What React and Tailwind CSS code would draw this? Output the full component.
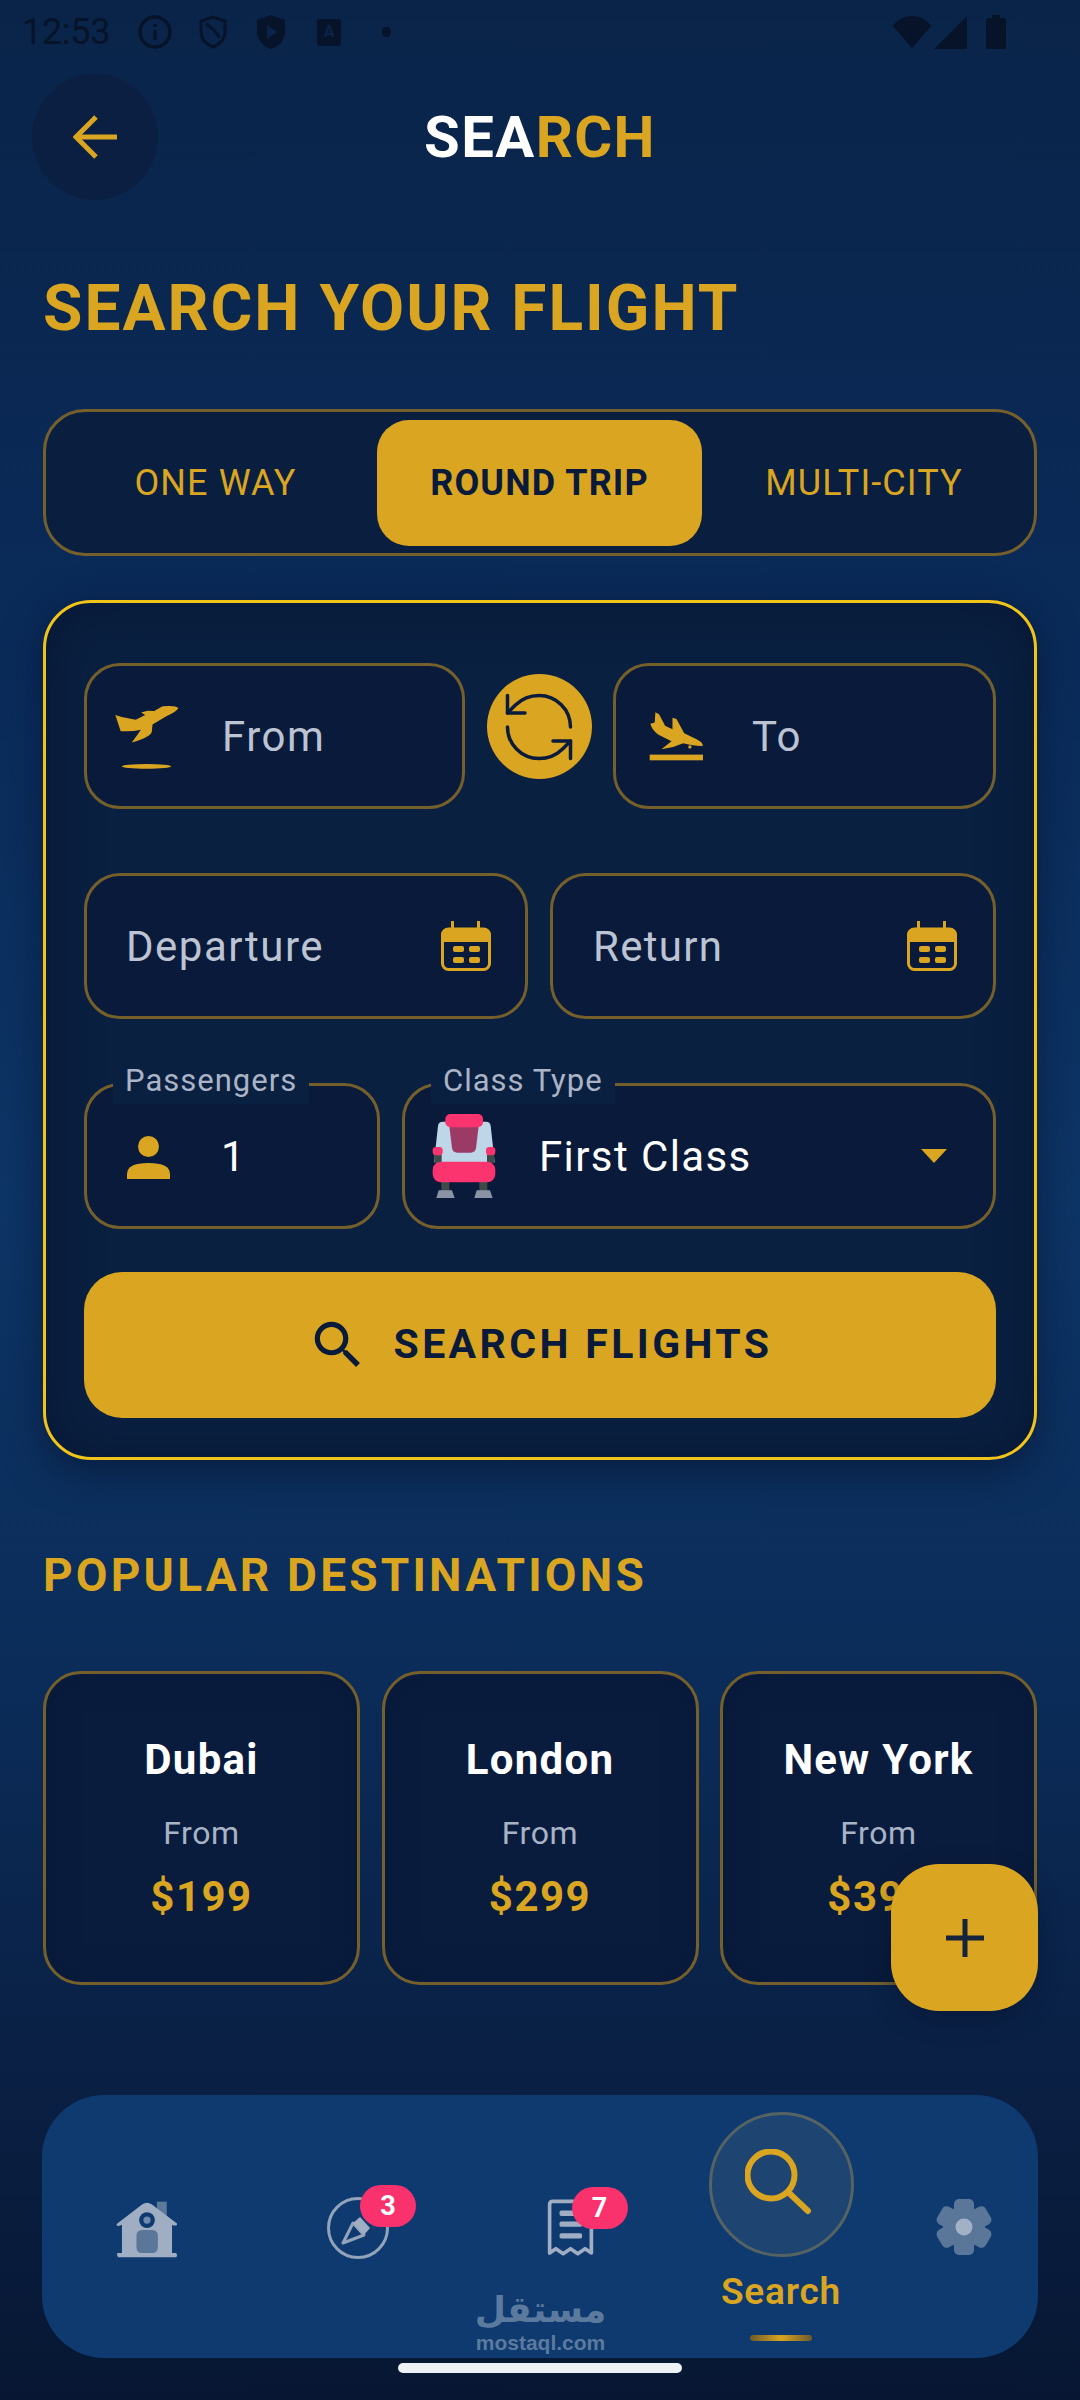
import React from "react";
import { RefreshCcw } from "lucide-react";
import { MdSearch } from "react-icons/md";

const destinations = [
  { city: "Dubai", price: "$199" },
  { city: "London", price: "$299" },
  { city: "New York", price: "$399" },
];

export default function App() {
  return (
    <div className="relative w-[1080px] h-[2400px] overflow-hidden [font-family:Roboto,sans-serif] bg-[linear-gradient(180deg,#0a2449_0%,#0a2a58_25%,#0d3566_50%,#0b2c59_70%,#0a2044_86%,#071733_100%)]">
      <StatusBar />

      {/* HEADER */}
      <div className="flex items-center justify-between px-[32px] mt-[10px]">
        <button className="flex items-center justify-center w-[126px] h-[126px] rounded-full bg-[#0a1f42]">
          <svg viewBox="0 0 44 44" className="w-[44px] h-[44px]" fill="none" stroke="#daa520" strokeWidth="5">
            <path d="M44 22H4" />
            <path d="M23 2 3 22l20 20" />
          </svg>
        </button>
        <h1 className="text-[58px] leading-[66px] font-bold tracking-[1.4px] text-white">
          SEA<span className="text-[#daa520]">RCH</span>
        </h1>
        <div className="w-[126px]" />
      </div>

      <div className="px-[43px]">
        <h2 className="mt-[72px] text-[64px] leading-[74px] font-bold tracking-[2px] text-[#daa520]">
          SEARCH YOUR FLIGHT
        </h2>

        {/* TABS */}
        <div className="mt-[63px] h-[147px] flex items-center rounded-[42px] border-[3px] border-[#75602c] bg-[#0a1f40] px-[8px] text-[36px] tracking-[1.1px] text-[#daa520]">
          <div className="w-[323px] text-center">ONE WAY</div>
          <div className="w-[325px] h-[126px] flex items-center justify-center rounded-[32px] bg-[#daa520] font-bold text-[#0a1a3a]">
            ROUND TRIP
          </div>
          <div className="flex-1 text-center">MULTI-CITY</div>
        </div>

        {/* SEARCH FORM */}
        <div className="mt-[44px] h-[860px] rounded-[48px] border-[3px] border-[#f0c419] bg-[#0a2040] shadow-[0_12px_40px_rgba(5,15,40,0.55),inset_0_0_50px_#081634] px-[38px] pt-[60px]">
          <div className="flex items-start justify-between">
            <Field className="w-[381px] pl-[27px]">
              <TakeoffIcon />
              <span className="ml-[41px] text-[42px] tracking-[1.5px] text-[#bcc4d4]">From</span>
            </Field>
            <button className="mt-[11px] flex items-center justify-center w-[105px] h-[105px] rounded-full bg-[#daa520]">
              <RefreshCcw size={84} strokeWidth={1} color="#0b1b3c" />
            </button>
            <Field className="w-[383px] pl-[32px]">
              <LandIcon />
              <span className="ml-[47px] text-[42px] tracking-[1.5px] text-[#bcc4d4]">To</span>
            </Field>
          </div>

          <div className="flex justify-between mt-[64px]">
            <Field className="w-[444px] pl-[39px] pr-[34px] justify-between">
              <span className="text-[42px] tracking-[1.5px] text-[#bcc4d4]">Departure</span>
              <CalendarIcon />
            </Field>
            <Field className="w-[446px] pl-[40px] pr-[36px] justify-between">
              <span className="text-[42px] tracking-[1.3px] text-[#bcc4d4]">Return</span>
              <CalendarIcon />
            </Field>
          </div>

          <div className="flex justify-between mt-[64px]">
            <Field className="relative w-[296px] pl-[40px]">
              <FloatLabel className="left-[26px]">Passengers</FloatLabel>
              <PersonIcon />
              <span className="ml-[51px] text-[42px] text-white">1</span>
            </Field>
            <Field className="relative w-[594px] pl-[27px] pr-[46px]">
              <FloatLabel className="left-[26px]">Class Type</FloatLabel>
              <SeatIcon />
              <span className="ml-[43px] text-[42px] tracking-[1.4px] text-white">First Class</span>
              <svg viewBox="0 0 26 14" className="ml-auto w-[26px] h-[14px]">
                <path d="M0 0h26L13 14z" fill="#daa520" />
              </svg>
            </Field>
          </div>

          <button className="mt-[43px] w-full h-[146px] flex items-center justify-center rounded-[38px] bg-[#daa520] text-[41px] font-bold tracking-[3.4px] text-[#0a1a3a]">
            <MdSearch size={62} color="#0a1a3a" />
            <span className="ml-[24px]">SEARCH FLIGHTS</span>
          </button>
        </div>

        {/* POPULAR */}
        <h3 className="mt-[88px] text-[46px] leading-[54px] font-bold tracking-[3.2px] text-[#daa520]">
          POPULAR DESTINATIONS
        </h3>

        <div className="mt-[69px] flex justify-between">
          {destinations.map((d) => (
            <div
              key={d.city}
              className="w-[317px] h-[314px] flex flex-col items-center rounded-[38px] border-[3px] border-[#75602c] bg-[#0a1c3d] shadow-[inset_0_0_30px_#08193a] pt-[61px]"
            >
              <div className="text-[42px] leading-[50px] font-bold tracking-[1.3px] text-white">{d.city}</div>
              <div className="mt-[29px] text-[32px] leading-[38px] tracking-[0.6px] text-[#a9b3c6]">From</div>
              <div className="mt-[20px] text-[42px] leading-[50px] font-bold tracking-[1.5px] text-[#daa520]">{d.price}</div>
            </div>
          ))}
        </div>
      </div>

      {/* FAB */}
      <button className="absolute left-[891px] top-[1864px] w-[147px] h-[147px] flex items-center justify-center rounded-[48px] bg-[#daa520] shadow-[0_8px_24px_rgba(5,15,40,0.4)]">
        <svg viewBox="0 0 38 38" className="w-[38px] h-[38px]" stroke="#15233c" strokeWidth="5">
          <path d="M19 0v38M0 19h38" />
        </svg>
      </button>

      <BottomNav />

      <div className="absolute left-[398px] top-[2363px] w-[284px] h-[10px] rounded-full bg-[#eef1f6]" />
    </div>
  );
}

/* ===============================
   HELPERS
================================ */
function Field({ className, children }) {
  return (
    <div className={`h-[146px] flex items-center rounded-[36px] border-[3px] border-[#75602c] bg-[#0a1a3a] ${className}`}>
      {children}
    </div>
  );
}

function FloatLabel({ className, children }) {
  return (
    <span className={`absolute top-[-28px] h-[46px] px-[12px] bg-[#0a2040] text-[31px] leading-[46px] tracking-[1px] text-[#aab4c6] ${className}`}>
      {children}
    </span>
  );
}

function StatusBar() {
  return (
    <div className="h-[64px] flex items-center pl-[22px] pr-[74px] text-[#061329]">
      <span className="text-[36px] leading-[40px] tracking-[-0.3px]">12:53</span>
      <svg viewBox="0 0 34 34" className="ml-[28px] w-[34px] h-[34px]" fill="none" stroke="currentColor" strokeWidth="3.5">
        <circle cx="17" cy="17" r="15" />
        <path d="M17 15v10M17 9v3" />
      </svg>
      <svg viewBox="0 0 28 34" className="ml-[27px] w-[28px] h-[34px]" fill="none" stroke="currentColor" strokeWidth="3">
        <path d="M14 2 2 6v11c0 7 5 12 12 15 7-3 12-8 12-15V6z" />
        <path d="M7 8c5 6 12 9 13 15" />
      </svg>
      <svg viewBox="0 0 28 34" className="ml-[30px] w-[28px] h-[34px]">
        <path d="M14 0 0 5v12c0 8 6 14 14 17 8-3 14-9 14-17V5z" fill="currentColor" />
        <path d="M10 10l10 7-10 7z" fill="#0a2449" />
      </svg>
      <div className="ml-[32px] w-[24px] h-[27px] rounded-[3px] bg-current flex items-center justify-center">
        <span className="text-[16px] leading-none font-bold text-[#0a2449]">A</span>
      </div>
      <div className="ml-[41px] w-[9px] h-[10px] rounded-full bg-current" />
      <svg viewBox="0 0 38 32" className="ml-auto w-[38px] h-[32px]" fill="currentColor">
        <path d="M19 32 0 10C5 3 12 0 19 0s14 3 19 10z" />
      </svg>
      <svg viewBox="0 0 33 33" className="ml-[3px] w-[33px] h-[33px]" fill="currentColor">
        <path d="M33 0v33H0z" />
      </svg>
      <svg viewBox="0 0 20 34" className="ml-[19px] w-[20px] h-[34px]" fill="currentColor">
        <path d="M6 0h8v3h4a2 2 0 0 1 2 2v27a2 2 0 0 1-2 2H2a2 2 0 0 1-2-2V5a2 2 0 0 1 2-2h4z" />
      </svg>
    </div>
  );
}

function BottomNav() {
  return (
    <div className="absolute left-[42px] top-[2095px] w-[996px] h-[263px] rounded-[62px] bg-[#0e3a70]">
      <div className="grid grid-cols-[210px_212px_212px_210px_152px] h-full">
        <div className="flex justify-center pt-[106px]">
          <HomeIcon />
        </div>
        <div className="flex justify-center pt-[102px]">
          <div className="relative">
            <CompassIcon />
            <Badge>3</Badge>
          </div>
        </div>
        <div className="flex justify-center pt-[104px]">
          <div className="relative">
            <ReceiptIcon />
            <Badge className="left-[25px]">7</Badge>
          </div>
        </div>
        <div className="flex flex-col items-center pt-[17px]">
          <div className="w-[145px] h-[145px] flex items-center justify-center rounded-full border-[3px] border-[#566363] bg-[#1e4472]">
            <svg viewBox="0 0 66 66" className="w-[66px] h-[66px] translate-x-[-3px] translate-y-[-3px]" fill="none" stroke="#daa520" strokeWidth="6" strokeLinecap="round">
              <circle cx="26" cy="26" r="23.5" />
              <path d="M43 43 63 62" />
            </svg>
          </div>
          <span className="mt-[12px] text-[37px] leading-[46px] font-semibold tracking-[0.8px] text-[#daa520]">Search</span>
          <div className="mt-[20px] w-[62px] h-[6px] rounded-full bg-[linear-gradient(90deg,#6e5a2b,#daa520,#6e5a2b)]" />
        </div>
        <div className="flex justify-center pt-[104px] pl-[4px]">
          <GearIcon />
        </div>
      </div>

      {/* watermark */}
      <div className="absolute left-[431px] top-[193px] w-[135px] flex flex-col items-center text-[#5c7a9d]">
        <span className="text-[36px] leading-[44px] font-bold [font-family:'DejaVu_Sans',sans-serif]">مستقل</span>
        <span className="text-[21px] leading-[22px] font-bold [font-family:'Liberation_Sans',sans-serif]">mostaql.com</span>
      </div>
    </div>
  );
}

function Badge({ className = "left-[33px]", children }) {
  return (
    <span className={`absolute top-[-12px] w-[56px] h-[42px] flex items-center justify-center rounded-full bg-[#f9326e] text-[27px] font-bold text-white ${className}`}>
      {children}
    </span>
  );
}

/* ===============================
   ICONS
================================ */
function TakeoffIcon() {
  return (
    <svg viewBox="225 190 200 200" className="w-[67px] h-[67px]">
      <path
        d="M229 226 248 232 290 240 318 226 306 218 325 213 345 214 370 200Q410 196 417 206 410 218 380 230L340 254 338 275Q335 292 278 308L295 285 305 270Q280 276 245 274Z"
        fill="#daa520"
      />
      <ellipse cx="322" cy="379" rx="74" ry="7" fill="#daa520" />
    </svg>
  );
}

function LandIcon() {
  return (
    <svg viewBox="325 215 170 155" className="w-[57px] h-[52px]" fill="#daa520">
      <path d="M332 256 345 252 347 222 358 228 376 262 398 272 398 238 410 242 433 284 470 302Q490 312 488 322 470 324 430 314L400 325 365 332 395 308 355 288Q335 272 332 256Z" />
      <circle cx="450" cy="325" r="5" />
      <rect x="330" y="348" width="159" height="17" />
    </svg>
  );
}

function CalendarIcon() {
  return (
    <svg viewBox="0 0 50 50" className="w-[50px] h-[50px]">
      <path d="M10 0h3v8h-3zM36 0h3v8h-3z" fill="#daa520" />
      <path d="M7 7h36a7 7 0 0 1 7 7v7H0v-7a7 7 0 0 1 7-7z" fill="#daa520" />
      <rect x="1.5" y="8" width="47" height="40.5" rx="6" fill="none" stroke="#daa520" strokeWidth="3" />
      <rect x="12" y="25" width="11" height="6" rx="2" fill="#daa520" />
      <rect x="28" y="25" width="11" height="6" rx="2" fill="#daa520" />
      <rect x="12" y="36" width="11" height="6" rx="2" fill="#daa520" />
      <rect x="28" y="36" width="11" height="6" rx="2" fill="#daa520" />
    </svg>
  );
}

function PersonIcon() {
  return (
    <svg viewBox="0 0 43 43" className="w-[43px] h-[43px] mt-[3px]" fill="#daa520">
      <circle cx="21.5" cy="10.5" r="10.5" />
      <path d="M0 43v-5q0-11 21.5-11T43 38v5z" />
    </svg>
  );
}

function SeatIcon() {
  return (
    <svg viewBox="1118 195 192 252" className="w-[64px] h-[84px] shrink-0">
      <path d="M1150 218h130q12 0 14 12l12 110h-182l12-110q2-12 14-12z" fill="#bdd6e8" />
      <path d="M1170 232h88l-8 65q-2 14-16 14h-40q-14 0-16-14z" fill="#9c3a66" />
      <rect x="1158" y="195" width="113" height="40" rx="15" fill="#fb3470" />
      <rect x="1125" y="316" width="22" height="26" fill="#3d4a4a" />
      <rect x="1283" y="316" width="22" height="26" fill="#3d4a4a" />
      <rect x="1120" y="294" width="30" height="25" rx="10" fill="#fb3470" />
      <rect x="1280" y="294" width="28" height="25" rx="10" fill="#fb3470" />
      <rect x="1146" y="398" width="24" height="28" fill="#3d4a4a" />
      <rect x="1260" y="398" width="24" height="28" fill="#3d4a4a" />
      <rect x="1120" y="338" width="188" height="62" rx="25" fill="#fb3470" />
      <path d="M1138 424h40l8 23h-55zM1252 424h40l8 23h-55z" fill="#8a94a6" />
    </svg>
  );
}

function HomeIcon() {
  return (
    <svg viewBox="230 362 188 173" className="w-[62px] h-[57px]">
      <rect x="354" y="364" width="30" height="44" fill="#5e7a9b" />
      <path
        d="M232 432 310 372Q324 362 338 372L415 430Q417 438 405 436L400 434V520H412Q416 522 415 530L412 533H236Q231 528 234 520H248V434L238 438Q230 438 232 432Z"
        fill="#a0aec4"
      />
      <circle cx="324" cy="420" r="24" fill="#0e3a70" />
      <circle cx="324" cy="420" r="11" fill="#6e8bac" />
      <rect x="292" y="450" width="65" height="70" rx="16" fill="#5a7799" />
    </svg>
  );
}

function CompassIcon() {
  return (
    <svg viewBox="0 0 62 62" className="w-[62px] h-[62px]" fill="none">
      <circle cx="31" cy="31" r="29.5" stroke="#93a3ba" strokeWidth="3" />
      <path d="M16 46 26 26 37 38z" stroke="#93a3ba" strokeWidth="3" strokeLinejoin="round" />
      <path d="M26 26 33 20 43 31 37 38z" fill="#a0aec4" />
    </svg>
  );
}

function ReceiptIcon() {
  return (
    <svg viewBox="80 355 140 172" className="w-[47px] h-[57px]">
      <path
        d="M87 518V372Q87 362 97 362H203Q213 362 213 372V518L194 505 172 520 150 505 128 520 106 505Z"
        fill="none"
        stroke="#a0aec4"
        strokeWidth="11"
        strokeLinejoin="round"
      />
      <rect x="117" y="390" width="68" height="16" rx="5" fill="#a0aec4" />
      <rect x="117" y="423" width="68" height="16" rx="5" fill="#a0aec4" />
      <rect x="117" y="458" width="68" height="16" rx="5" fill="#a0aec4" />
    </svg>
  );
}

function GearIcon() {
  return (
    <svg viewBox="0 0 56 56" className="w-[56px] h-[56px]" fill="#5a7799">
      <circle cx="28" cy="28" r="21" />
      <rect x="18" y="0" width="20" height="16" rx="5" />
      <rect x="18" y="0" width="20" height="16" rx="5" transform="rotate(60 28 28)" />
      <rect x="18" y="0" width="20" height="16" rx="5" transform="rotate(120 28 28)" />
      <rect x="18" y="0" width="20" height="16" rx="5" transform="rotate(180 28 28)" />
      <rect x="18" y="0" width="20" height="16" rx="5" transform="rotate(240 28 28)" />
      <rect x="18" y="0" width="20" height="16" rx="5" transform="rotate(300 28 28)" />
      <circle cx="28" cy="28" r="8.5" fill="#a3b1c7" />
    </svg>
  );
}
